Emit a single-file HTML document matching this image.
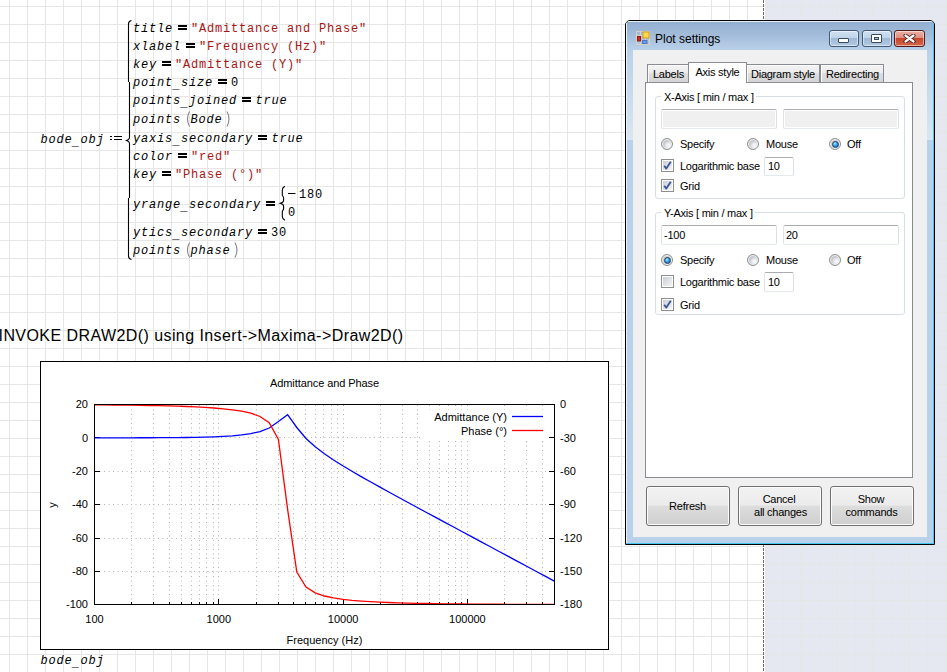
<!DOCTYPE html>
<html><head><meta charset="utf-8">
<style>
html,body{margin:0;padding:0}
body{width:947px;height:672px;overflow:hidden;position:relative;background-color:#fff;
background-image:linear-gradient(to right,#e6e6e6 1px,transparent 1px),linear-gradient(to bottom,#e6e6e6 1px,transparent 1px);
background-size:18px 18px;background-position:9px 6px;font-family:"Liberation Sans",sans-serif}
.abs{position:absolute}
#lav{position:absolute;left:765px;top:0;width:182px;height:672px;background-color:#e5e8f1;
background-image:linear-gradient(to right,#e6e6e6 1px,transparent 1px),linear-gradient(to bottom,#e6e6e6 1px,transparent 1px);
background-size:18px 18px;background-position:0px 6px}
#dash{position:absolute;left:763px;top:0;width:1px;height:672px;
background-image:linear-gradient(to bottom,#6a6a6a 3px,transparent 3px);background-size:1px 4px}
svg.ov{position:absolute;left:0;top:0}
.m{font-family:"Liberation Mono",monospace;font-size:12px;letter-spacing:0.8px}
.id{font-style:italic;fill:#000}
.str{fill:#a81414}
.num{fill:#000}
/* dialog */
#win{position:absolute;left:625px;top:20px;width:310px;height:525px;box-sizing:border-box;
border:1px solid #000;border-radius:5px 5px 0 0;background:linear-gradient(to bottom,#93afd0 1px,#a3bcda 14px,#b9d1ea 29px,#b9d1ea 100%);overflow:hidden}
#win .ht{position:absolute;left:0;top:0;width:100%;height:1px;background:#e4edf7}
#win .hl{position:absolute;left:0;top:0;width:1px;height:100%;background:#eef4fa}
#win .cy{position:absolute;left:307px;top:0;width:1px;height:100%;background:#42c8f0}
#win .cyb{position:absolute;left:0;top:522px;width:100%;height:1px;background:#42c8f0}
#client{position:absolute;left:633px;top:50px;width:294px;height:487px;background:#f0f0f0}
.t11{position:absolute;font-size:11px;line-height:12px;white-space:nowrap;color:#000;letter-spacing:-0.25px}
.tab{position:absolute;box-sizing:border-box;border:1px solid #898c95;border-bottom:none;
background:linear-gradient(to bottom,#f3f3f3 0%,#ececec 45%,#dedede 50%,#d4d4d4 100%);box-shadow:inset 1px 1px 0 #fff}
.tabact{position:absolute;box-sizing:border-box;border:1px solid #898c95;border-bottom:none;background:#fff}
#panel{position:absolute;left:645px;top:82px;width:268px;height:396px;box-sizing:border-box;border:1px solid #898c95;background:#fff}
.grp{position:absolute;box-sizing:border-box;border:1px solid #d5dfe5;border-radius:3px}
.grplab{position:absolute;background:#fff;padding:0 2px}
.tb{position:absolute;box-sizing:border-box;border:1px solid;border-color:#abadb3 #dbdfe6 #e3e9ef #e2e3ea;border-radius:2px}
.tb.dis{background:#f0f0f0;box-shadow:inset 0 0 0 1px #fff}
.tb.en{background:#fff}
.rad{position:absolute;width:12px;height:12px;box-sizing:border-box;border-radius:50%;border:1px solid #8e8f8f;
background:radial-gradient(circle at 65% 65%,#fbfbfb 0,#e2e4e8 3px,#c6c9ce 4.5px);box-shadow:inset 0 0 0 1px #f4f4f4}
.rad.on:after{content:"";position:absolute;left:1.5px;top:1.5px;width:7px;height:7px;border-radius:50%;box-sizing:border-box;border:1px solid #163a66;
background:radial-gradient(circle at 35% 30%,#b8ecff 0,#3aa8ea 2px,#1670bf 4px)}
.chk{position:absolute;width:13px;height:13px;box-sizing:border-box;border:1px solid #8e8f8f;background:#fff}
.chk:before{content:"";position:absolute;left:1px;top:1px;width:9px;height:9px;background:linear-gradient(135deg,#cbcfd5 0,#e3e5e8 60%,#f4f4f4 100%)}
.btn{position:absolute;box-sizing:border-box;border:1px solid #707070;border-radius:3px;
background:linear-gradient(to bottom,#f2f2f2 0%,#ebebeb 48%,#dddddd 50%,#cfcfcf 100%);box-shadow:inset 0 0 0 1px #fcfcfc;text-align:center}
.cap{position:absolute;box-sizing:border-box;height:16px;top:30px;border:1px solid #3f5876;border-radius:3px;
background:linear-gradient(to bottom,#d2e1f1 0%,#bed3ea 45%,#9fb9d6 50%,#b2c9e2 100%);box-shadow:inset 0 0 0 1px rgba(255,255,255,.5)}
.cap.close{border-color:#4e1b19;background:linear-gradient(to bottom,#eab1a6 0%,#de8f7e 45%,#c8462c 50%,#d4664a 100%)}
</style></head><body>
<div id="lav"></div>
<div id="dash"></div>
<svg class="ov" width="947" height="672" viewBox="0 0 947 672"><rect x="40.5" y="361.5" width="568" height="288" fill="#fff" stroke="#000" stroke-width="1"/><path d="M131.5 405V604 M153.5 405V604 M169.5 405V604 M181.5 405V604 M191.5 405V604 M199.5 405V604 M206.5 405V604 M213.5 405V604 M218.5 405V604 M256.5 405V604 M278.5 405V604 M293.5 405V604 M305.5 405V604 M315.5 405V604 M323.5 405V604 M331.5 405V604 M337.5 405V604 M343.5 405V604 M380.5 405V604 M402.5 405V604 M417.5 405V604 M429.5 405V604 M439.5 405V604 M448.5 405V604 M455.5 405V604 M461.5 405V604 M467.5 405V604 M504.5 405V604 M526.5 405V604 M542.5 405V604 M554.5 405V604 M95 437.5H554 M95 471.5H554 M95 504.5H554 M95 538.5H554 M95 571.5H554" stroke="#b4b4b4" stroke-width="1" stroke-dasharray="1 3.5" fill="none"/><rect x="421" y="410" width="133" height="30" fill="#fff"/><path d="M131.5 604V602 M153.5 604V602 M169.5 604V602 M181.5 604V602 M191.5 604V602 M199.5 604V602 M206.5 604V602 M213.5 604V602 M218.5 604V599 M256.5 604V602 M278.5 604V602 M293.5 604V602 M305.5 604V602 M315.5 604V602 M323.5 604V602 M331.5 604V602 M337.5 604V602 M343.5 604V599 M380.5 604V602 M402.5 604V602 M417.5 604V602 M429.5 604V602 M439.5 604V602 M448.5 604V602 M455.5 604V602 M461.5 604V602 M467.5 604V599 M504.5 604V602 M526.5 604V602 M542.5 604V602 M554.5 604V602 M94 437.5H100 M94 471.5H100 M94 504.5H100 M94 538.5H100 M94 571.5H100 M549 437.5H555 M549 471.5H555 M549 504.5H555 M549 538.5H555 M549 571.5H555" stroke="#000" stroke-width="1" fill="none"/><svg x="94" y="404" width="462" height="202" viewBox="94 404 462 202" overflow="hidden"><polyline points="94.50,437.82 103.70,437.82 112.89,437.81 122.09,437.80 131.28,437.79 140.48,437.77 149.67,437.75 158.87,437.71 168.07,437.66 177.26,437.59 186.46,437.49 195.65,437.35 204.85,437.15 214.04,436.86 223.24,436.44 232.43,435.84 241.63,434.95 250.83,433.61 260.02,431.51 269.22,428.00 278.41,421.59 287.61,414.69 296.80,427.50 306.00,438.49 315.20,446.76 324.39,453.71 333.59,459.93 342.78,465.72 351.98,471.23 361.17,476.57 370.37,481.78 379.56,486.91 388.76,491.97 397.96,497.00 407.15,502.00 416.35,506.98 425.54,511.95 434.74,516.91 443.93,521.86 453.13,526.80 462.33,531.74 471.52,536.68 480.72,541.62 489.91,546.55 499.11,551.49 508.30,556.42 517.50,561.35 526.70,566.28 535.89,571.22 545.09,576.15 554.28,581.08" fill="none" stroke="#0000ff" stroke-width="1.3"/><polyline points="94.50,404.86 103.70,404.93 112.89,405.01 122.09,405.10 131.28,405.21 140.48,405.34 149.67,405.50 158.87,405.69 168.07,405.92 177.26,406.19 186.46,406.52 195.65,406.92 204.85,407.41 214.04,408.01 223.24,408.79 232.43,409.80 241.63,411.19 250.83,413.22 260.02,416.49 269.22,422.75 278.41,439.47 287.61,509.39 296.80,572.06 306.00,587.04 315.20,592.89 324.39,596.00 333.59,597.95 342.78,599.30 351.98,600.29 361.17,601.05 370.37,601.64 379.56,602.12 388.76,602.51 397.96,602.84 407.15,603.10 416.35,603.33 425.54,603.51 434.74,603.67 443.93,603.80 453.13,603.91 462.33,604.00 471.52,604.08 480.72,604.15 489.91,604.20 499.11,604.25 508.30,604.29 517.50,604.32 526.70,604.35 535.89,604.37 545.09,604.39 554.28,604.41" fill="none" stroke="#ff0000" stroke-width="1.3"/></svg><rect x="94.5" y="404.5" width="460" height="200" fill="none" stroke="#000" stroke-width="1"/><path d="M512 416.5H543" stroke="#0000ff" stroke-width="1.3"/><path d="M512 430.5H543" stroke="#ff0000" stroke-width="1.3"/><g font-family="Liberation Sans" font-size="11" fill="#000"><text x="324.5" y="387" text-anchor="middle" letter-spacing="-0.08">Admittance and Phase</text><text x="324.5" y="643.5" text-anchor="middle">Frequency (Hz)</text><text x="94.5" y="623" text-anchor="middle">100</text><text x="218.8" y="623" text-anchor="middle">1000</text><text x="343.1" y="623" text-anchor="middle">10000</text><text x="467.4" y="623" text-anchor="middle">100000</text><text x="88" y="408.2" text-anchor="end">20</text><text x="88" y="441.5" text-anchor="end">0</text><text x="88" y="474.9" text-anchor="end">-20</text><text x="88" y="508.2" text-anchor="end">-40</text><text x="88" y="541.5" text-anchor="end">-60</text><text x="88" y="574.9" text-anchor="end">-80</text><text x="88" y="608.2" text-anchor="end">-100</text><text x="560" y="408.2" text-anchor="start">0</text><text x="560" y="441.5" text-anchor="start">-30</text><text x="560" y="474.9" text-anchor="start">-60</text><text x="560" y="508.2" text-anchor="start">-90</text><text x="560" y="541.5" text-anchor="start">-120</text><text x="560" y="574.9" text-anchor="start">-150</text><text x="560" y="608.2" text-anchor="start">-180</text><text x="507" y="420.5" text-anchor="end">Admittance (Y)</text><text x="507" y="434.5" text-anchor="end">Phase (°)</text><text x="55.5" y="505" text-anchor="middle" transform="rotate(-90 55.5 505)">y</text></g></svg>
<svg class="ov" width="947" height="672" viewBox="0 0 947 672"><text class="m id" x="133" y="32">title</text><rect x="178.0" y="25" width="9" height="2" fill="#000"/><rect x="178.0" y="28" width="9" height="2" fill="#000"/><text class="m str" x="191.0" y="32">"Admittance and Phase"</text><text class="m id" x="133" y="50">xlabel</text><rect x="186.0" y="43" width="9" height="2" fill="#000"/><rect x="186.0" y="46" width="9" height="2" fill="#000"/><text class="m str" x="199.0" y="50">"Frequency (Hz)"</text><text class="m id" x="133" y="68">key</text><rect x="162.0" y="61" width="9" height="2" fill="#000"/><rect x="162.0" y="64" width="9" height="2" fill="#000"/><text class="m str" x="175.0" y="68">"Admittance (Y)"</text><text class="m id" x="133" y="86">point<tspan dy="2">_</tspan><tspan dy="-2">size</tspan></text><rect x="218.0" y="79" width="9" height="2" fill="#000"/><rect x="218.0" y="82" width="9" height="2" fill="#000"/><text class="m num" x="231.0" y="86">0</text><text class="m id" x="133" y="104">points<tspan dy="2">_</tspan><tspan dy="-2">joined</tspan></text><rect x="242.0" y="97" width="9" height="2" fill="#000"/><rect x="242.0" y="100" width="9" height="2" fill="#000"/><text class="m id" x="255.5" y="104">true</text><text class="m id" x="133" y="123">points</text><path d="M189.5 111.5 Q185.5 119.0 189.5 126.5" stroke="#777" stroke-width="1" fill="none"/><text class="m id" x="190.5" y="123">Bode</text><path d="M227.0 111.5 Q231.0 119.0 227.0 126.5" stroke="#777" stroke-width="1" fill="none"/><text class="m id" x="133" y="142">yaxis<tspan dy="2">_</tspan><tspan dy="-2">secondary</tspan></text><rect x="258.0" y="135" width="9" height="2" fill="#000"/><rect x="258.0" y="138" width="9" height="2" fill="#000"/><text class="m id" x="271.5" y="142">true</text><text class="m id" x="133" y="160">color</text><rect x="178.0" y="153" width="9" height="2" fill="#000"/><rect x="178.0" y="156" width="9" height="2" fill="#000"/><text class="m str" x="191.0" y="160">"red"</text><text class="m id" x="133" y="178">key</text><rect x="162.0" y="171" width="9" height="2" fill="#000"/><rect x="162.0" y="174" width="9" height="2" fill="#000"/><text class="m str" x="175.0" y="178">"Phase (°)"</text><text class="m id" x="133" y="208">yrange<tspan dy="2">_</tspan><tspan dy="-2">secondary</tspan></text><rect x="266.0" y="201" width="9" height="2" fill="#000"/><rect x="266.0" y="204" width="9" height="2" fill="#000"/><path d="M284.9 186.3 C283.6 187 282.3 188.2 282.3 190 V195 C282.3 196 283.6 196.6 283.6 197.8 V200.6 C283.6 202 282 202.8 280.2 203.3 C282 203.8 283.6 204.6 283.6 206 V208.8 C283.6 210 282.3 210.6 282.3 211.6 V216.6 C282.3 218.4 283.6 219.6 284.9 220.3" stroke="#000" stroke-width="1.1" fill="none"/><rect x="288" y="193" width="7.5" height="1" fill="#000"/><text class="m num" x="299" y="198">180</text><text class="m num" x="288" y="216">0</text><text class="m id" x="133" y="236">ytics<tspan dy="2">_</tspan><tspan dy="-2">secondary</tspan></text><rect x="258.0" y="229" width="9" height="2" fill="#000"/><rect x="258.0" y="232" width="9" height="2" fill="#000"/><text class="m num" x="271.0" y="236">30</text><text class="m id" x="133" y="254">points</text><path d="M189.5 242.5 Q185.5 250.0 189.5 257.5" stroke="#777" stroke-width="1" fill="none"/><text class="m id" x="190.5" y="254">phase</text><path d="M235.0 242.5 Q239.0 250.0 235.0 257.5" stroke="#777" stroke-width="1" fill="none"/><path d="M131.5 20.5 Q128.5 21 128.5 24 V82 M129.5 82 V137.5 Q129.5 139.5 126.5 140.5 Q129.5 141.5 129.5 143.5 V198 M128.5 198 V256 Q128.5 259 131.5 259.5" stroke="#000" stroke-width="1.1" fill="none"/><text class="m id" x="40.5" y="143">bode<tspan dy="2">_</tspan><tspan dy="-2">obj</tspan></text><rect x="110" y="136" width="2" height="1" fill="#000"/><rect x="110" y="139" width="2" height="1" fill="#000"/><rect x="114" y="136" width="8" height="1" fill="#000"/><rect x="114" y="139" width="8" height="1" fill="#000"/><text class="m id" x="40.5" y="664">bode<tspan dy="2">_</tspan><tspan dy="-2">obj</tspan></text><text x="-1.5" y="341" font-family="Liberation Sans" font-size="16" letter-spacing="0.43" fill="#000">INVOKE DRAW2D() using Insert-&gt;Maxima-&gt;Draw2D()</text></svg>
<div id="win"><div class="ht"></div><div class="hl"></div><div class="cy"></div><div class="cyb"></div></div><div class="abs" style="left:627px;top:50px;width:6px;height:90px;background:linear-gradient(to bottom,#b9d1ea,#d9e6f3)"></div><div class="abs" style="left:927px;top:50px;width:6px;height:90px;background:linear-gradient(to bottom,#b9d1ea,#d9e6f3)"></div><div id="client"></div><svg class="abs" style="left:636px;top:31px" width="14" height="14" viewBox="0 0 14 14"><path d="M0.5 0.5H13.5V13.5H0.5Z M0.5 4.5H13.5 M0.5 9.5H13.5 M4.5 0.5V13.5 M9.5 0.5V13.5" stroke="#d8d0c4" stroke-width="1" fill="none"/><rect x="1.5" y="5.5" width="3" height="4.5" fill="#d42828" stroke="#901818"/><rect x="7" y="1" width="6" height="6" fill="#ffd84a" stroke="#d0a020" stroke-width="1"/><rect x="6.5" y="9.5" width="4.5" height="3" fill="#6a9be6" stroke="#4a78c0"/></svg><div class="t11" style="left:655px;top:33px;font-size:12px;letter-spacing:0;color:#000">Plot settings</div><div class="cap" style="left:829px;top:30px;width:30px;height:17px;"></div><div class="cap" style="left:862px;top:30px;width:30px;height:17px;"></div><div class="cap close" style="left:894px;top:30px;width:31px;height:17px;"></div><div class="abs" style="left:838px;top:38px;width:11px;height:5px;box-sizing:border-box;border:1px solid #3a4a60;border-radius:1px;background:#fff"></div><div class="abs" style="left:871px;top:34px;width:11px;height:9px;box-sizing:border-box;border:1px solid #3a4a60;border-radius:1px;background:#fff"><div class="abs" style="left:2px;top:2px;width:5px;height:3px;box-sizing:border-box;border:1px solid #3a4a60;background:#9fb9d6"></div></div><svg class="abs" style="left:903px;top:34px" width="13" height="9" viewBox="0 0 13 9"><path d="M2.5 1.5L10.5 7.5M10.5 1.5L2.5 7.5" stroke="#4a1a18" stroke-width="4" stroke-linecap="round"/><path d="M2.5 1.5L10.5 7.5M10.5 1.5L2.5 7.5" stroke="#fff" stroke-width="2.2" stroke-linecap="round"/></svg><div id="panel"></div><div class="tab" style="left:647px;top:64px;width:42px;height:18px;"></div><div class="tab" style="left:746px;top:64px;width:74px;height:18px;"></div><div class="tab" style="left:820px;top:64px;width:64px;height:18px;"></div><div class="tabact" style="left:688px;top:62px;width:59px;height:21px;"></div><div class="t11" style="left:653px;top:68px;font-size:11px;">Labels</div><div class="t11" style="left:695.5px;top:66px;font-size:11px;">Axis style</div><div class="t11" style="left:751px;top:68px;font-size:11px;">Diagram style</div><div class="t11" style="left:826px;top:68px;font-size:11px;">Redirecting</div><div class="grp" style="left:655px;top:96px;width:250px;height:103px;"></div><div class="t11" style="left:661px;top:91px;background:#fff;padding:0 2px 0 3px">X-Axis [ min / max ]</div><div class="grp" style="left:655px;top:212px;width:250px;height:103px;"></div><div class="t11" style="left:661px;top:207px;background:#fff;padding:0 2px 0 3px">Y-Axis [ min / max ]</div><div class="tb dis" style="left:661px;top:109px;width:116px;height:20px;"></div><div class="tb dis" style="left:783px;top:109px;width:116px;height:20px;"></div><div class="tb en" style="left:661px;top:225px;width:116px;height:20px;"></div><div class="tb en" style="left:783px;top:225px;width:116px;height:20px;"></div><div class="t11" style="left:664px;top:229px;font-size:11px;">-100</div><div class="t11" style="left:786px;top:229px;font-size:11px;">20</div><div class="rad" style="left:661px;top:138px;width:12px;height:12px;"></div><div class="t11" style="left:680px;top:138px;font-size:11px;">Specify</div><div class="rad" style="left:747px;top:138px;width:12px;height:12px;"></div><div class="t11" style="left:766px;top:138px;font-size:11px;">Mouse</div><div class="rad on" style="left:829px;top:138px;width:12px;height:12px;"></div><div class="t11" style="left:847px;top:138px;font-size:11px;">Off</div><div class="rad on" style="left:661px;top:254px;width:12px;height:12px;"></div><div class="t11" style="left:680px;top:254px;font-size:11px;">Specify</div><div class="rad" style="left:747px;top:254px;width:12px;height:12px;"></div><div class="t11" style="left:766px;top:254px;font-size:11px;">Mouse</div><div class="rad" style="left:829px;top:254px;width:12px;height:12px;"></div><div class="t11" style="left:847px;top:254px;font-size:11px;">Off</div><div class="chk" style="left:661px;top:159px;width:13px;height:13px;"></div><svg class="abs" style="left:661px;top:159px" width="13" height="13" viewBox="0 0 13 13"><path d="M3.2 6.8L5.3 9.6L9.8 2.8" stroke="#3d5796" stroke-width="1.8" fill="none" stroke-linejoin="round"/></svg><div class="t11" style="left:680px;top:160px;font-size:11px;">Logarithmic base</div><div class="tb en" style="left:764px;top:157px;width:30px;height:19px;"></div><div class="t11" style="left:768px;top:160px;font-size:11px;">10</div><div class="chk" style="left:661px;top:179px;width:13px;height:13px;"></div><svg class="abs" style="left:661px;top:179px" width="13" height="13" viewBox="0 0 13 13"><path d="M3.2 6.8L5.3 9.6L9.8 2.8" stroke="#3d5796" stroke-width="1.8" fill="none" stroke-linejoin="round"/></svg><div class="t11" style="left:680px;top:180px;font-size:11px;">Grid</div><div class="chk" style="left:661px;top:275px;width:13px;height:13px;"></div><div class="t11" style="left:680px;top:276px;font-size:11px;">Logarithmic base</div><div class="tb en" style="left:764px;top:272px;width:30px;height:20px;"></div><div class="t11" style="left:768px;top:276px;font-size:11px;">10</div><div class="chk" style="left:661px;top:298px;width:13px;height:13px;"></div><svg class="abs" style="left:661px;top:298px" width="13" height="13" viewBox="0 0 13 13"><path d="M3.2 6.8L5.3 9.6L9.8 2.8" stroke="#3d5796" stroke-width="1.8" fill="none" stroke-linejoin="round"/></svg><div class="t11" style="left:680px;top:298.5px;font-size:11px;">Grid</div><div class="btn" style="left:646px;top:486px;width:84px;height:40px;"></div><div class="btn" style="left:738px;top:486px;width:84px;height:40px;"></div><div class="btn" style="left:830px;top:486px;width:84px;height:40px;"></div><div class="t11" style="left:587.5px;top:500px;width:200px;text-align:center;font-size:11px;">Refresh</div><div class="t11" style="left:679px;top:493px;width:200px;text-align:center;font-size:11px;">Cancel</div><div class="t11" style="left:680.5px;top:506px;width:200px;text-align:center;font-size:11px;">all changes</div><div class="t11" style="left:771px;top:493px;width:200px;text-align:center;font-size:11px;">Show</div><div class="t11" style="left:771.5px;top:506px;width:200px;text-align:center;font-size:11px;">commands</div>
</body></html>
